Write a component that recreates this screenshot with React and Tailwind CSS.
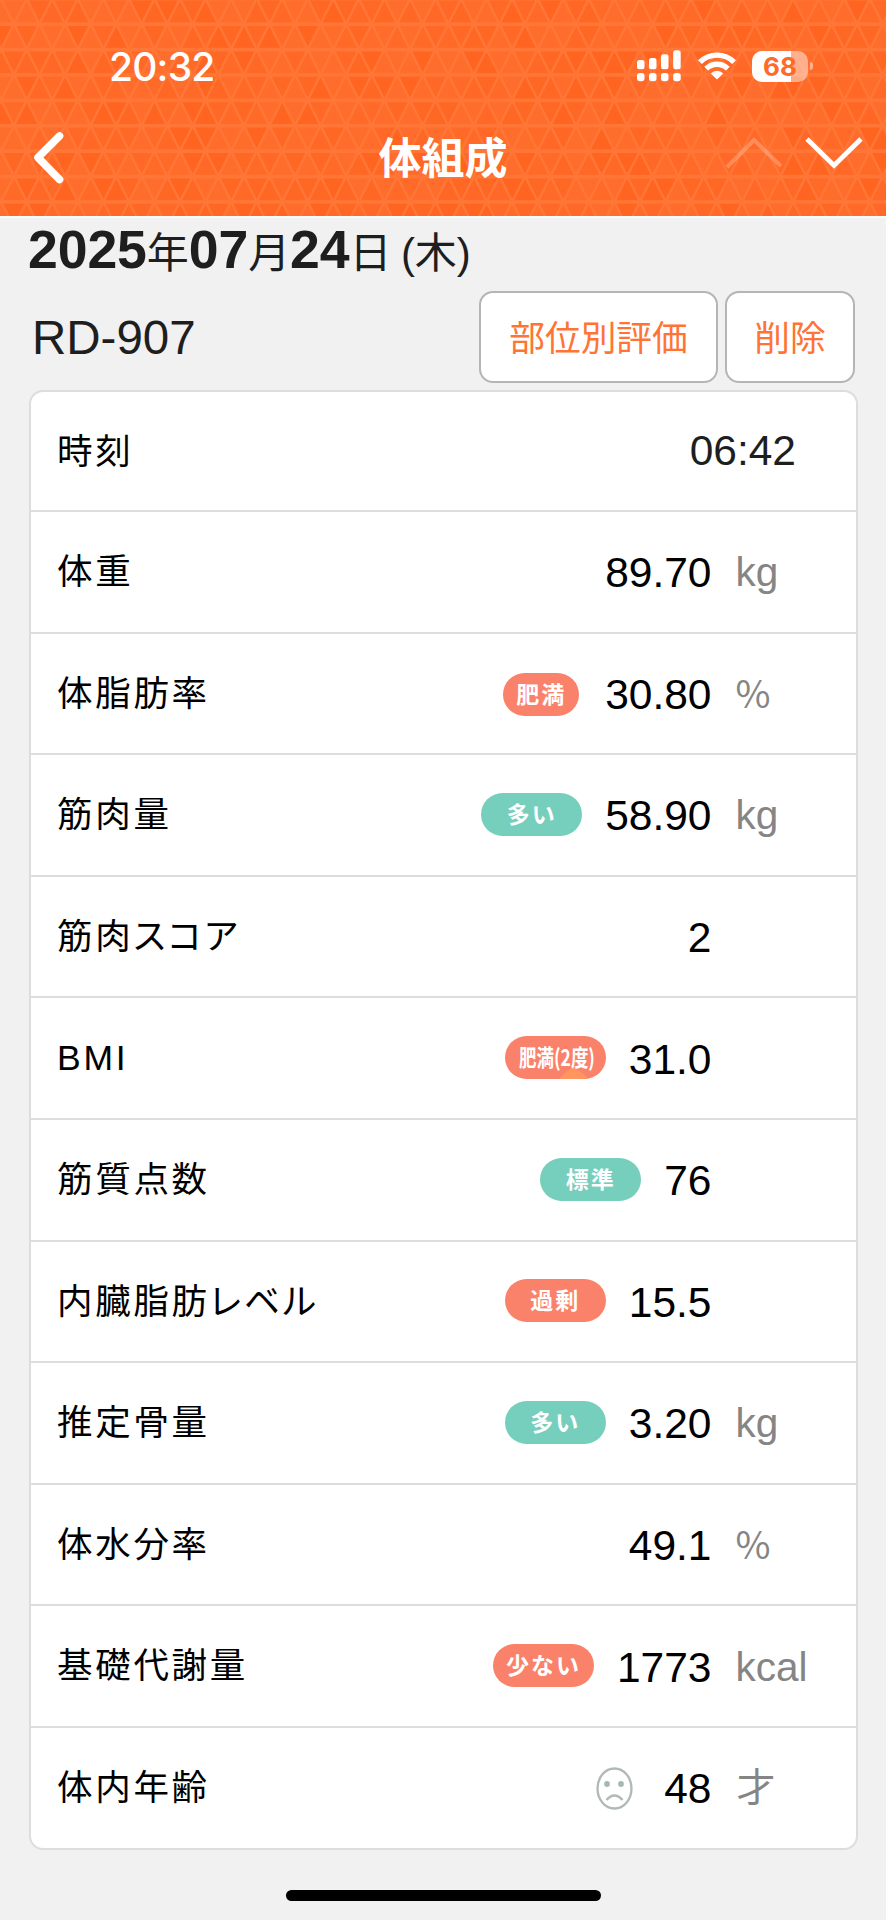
import React from "react";

const rows = [
  { label: "体重", value: "89.70", unit: "kg" },
  { label: "体脂肪率", value: "30.80", unit: "%", pill: { text: "肥満", tone: "red", small: true } },
  { label: "筋肉量", value: "58.90", unit: "kg", pill: { text: "多い", tone: "green" } },
  { label: "筋肉スコア", value: "2" },
  { label: "BMI", value: "31.0", pill: { text: "肥満(2度)", tone: "red", condensed: true } },
  { label: "筋質点数", value: "76", pill: { text: "標準", tone: "green" } },
  { label: "内臓脂肪レベル", value: "15.5", pill: { text: "過剰", tone: "red" } },
  { label: "推定骨量", value: "3.20", unit: "kg", pill: { text: "多い", tone: "green" } },
  { label: "体水分率", value: "49.1", unit: "%" },
  { label: "基礎代謝量", value: "1773", unit: "kcal", pill: { text: "少ない", tone: "red" } },
  { label: "体内年齢", value: "48", unit: "才", face: true },
];

const shades = ["#ff6c2b", "#ff6725", "#ff6a28", "#ff6421", "#ff6826", "#ff6d2c"];

function TrianglePattern() {
  const w = 25.55;
  const h = 25.4;
  const tris = [];
  for (let r = 0; r < 9; r++) {
    const top = -1.4 + r * h;
    const even = r % 2 === 0;
    const topX = even ? 1.2 : 13.97;
    const botX = even ? 13.97 : 1.2;
    for (let c = -2; c < 36; c++) {
      const a = Math.abs(Math.floor(Math.sin(r * 127.1 + c * 311.7) * 43758.5)) % 6;
      const b = Math.abs(Math.floor(Math.sin(r * 269.5 + c * 183.3) * 24634.6)) % 6;
      const tx = topX + c * w;
      const bx = botX + c * w;
      const mid = tx + w / 2;
      tris.push(
        <path key={`d${r}-${c}`} fill={shades[a]} d={`M${tx} ${top}H${tx + w}L${mid} ${top + h}Z`} />,
        <path key={`u${r}-${c}`} fill={shades[b]} d={`M${bx} ${top + h}H${bx + w}L${bx + w / 2} ${top}Z`} />
      );
    }
  }
  return (
    <svg className="absolute inset-0" width="886" height="216" viewBox="0 0 886 216" aria-hidden="true">
      <rect width="886" height="216" fill="#ff6927" />
      <g stroke="#ff7636" strokeWidth="2.4">{tris}</g>
      <g stroke="#ff7636" strokeWidth="3.6">
        {Array.from({ length: 9 }, (_, r) => (
          <path key={r} d={`M0 ${-1.2 + r * h}H886`} />
        ))}
      </g>
    </svg>
  );
}

function SignalIcon() {
  return (
    <svg width="44" height="32" viewBox="0 0 44 32" fill="#fff">
      <rect x="0" y="10" width="7.5" height="9.3" rx="2.5" />
      <rect x="12" y="8" width="7.5" height="11.3" rx="2.5" />
      <rect x="24" y="4.3" width="7.5" height="15" rx="2.5" />
      <rect x="36.2" y="0.3" width="7.5" height="19" rx="2.5" />
      <rect x="0" y="23" width="7.5" height="8.3" rx="2.8" />
      <rect x="12" y="23" width="7.5" height="8.3" rx="2.8" />
      <rect x="24" y="23" width="7.5" height="8.3" rx="2.8" />
      <rect x="36.2" y="23" width="7.5" height="8.3" rx="2.8" />
    </svg>
  );
}

function WifiIcon() {
  return (
    <svg width="38" height="28" viewBox="0 0 38 28" fill="none" stroke="#fff" strokeWidth="5.4">
      <path d="M1.9 10.2A24.2 24.2 0 0 1 36.1 10.2" />
      <path d="M8.2 16.7A15.4 15.4 0 0 1 29.8 16.7" />
      <path d="M12.8 21.4A8.8 8.8 0 0 1 25.2 21.4L19 27.6Z" fill="#fff" stroke="none" />
    </svg>
  );
}

function Battery() {
  return (
    <div className="flex items-center gap-[2px]">
      <div className="relative h-[31px] w-[56px] overflow-hidden rounded-[10px] bg-white/45">
        <div className="h-full w-[38.5px] bg-white" />
        <span className="absolute inset-0 text-center font-['Inter'] text-[26px] leading-[31px] font-bold text-[#ff6a28]">68</span>
      </div>
      <div className="h-[8px] w-[3px] rounded-r-full bg-white/45" />
    </div>
  );
}

function Pill({ text, tone, small, condensed }) {
  const bg = tone === "red" ? "bg-[#fb826a]" : "bg-[#76cebc]";
  const size = small ? "w-[76px] mr-[26px] mt-[2px]" : "w-[101px] mr-[23px] -mt-[1px]";
  return (
    <div className={`relative flex h-[43px] shrink-0 items-center justify-center overflow-hidden rounded-full font-['Noto_Sans_CJK_JP'] ${bg} ${size}`}>
      {condensed && (
        <svg className="absolute bottom-0 left-[54px]" width="30" height="11" viewBox="0 0 30 11">
          <path d="M0 11L9 2Q14 -2 19 2L30 11Z" fill="#ff955f" />
        </svg>
      )}
      {condensed ? (
        <span className="relative left-[2px] -mt-[2px] scale-x-[0.76] text-[23px] leading-none font-bold whitespace-nowrap text-white">{text}</span>
      ) : (
        <span className="-mt-[2px] text-[23px] leading-none font-bold tracking-[2px] whitespace-nowrap text-white">{text}</span>
      )}
    </div>
  );
}

function SadFace() {
  return (
    <svg className="mr-[31.5px] mt-[2px]" width="37" height="43" viewBox="0 0 37 43" fill="none" stroke="#b0b9b8" strokeWidth="2.3">
      <ellipse cx="18.5" cy="21.5" rx="17" ry="20" />
      <circle cx="11" cy="17" r="2.9" fill="#a5b8b6" stroke="none" />
      <circle cx="25" cy="17" r="2.9" fill="#a5b8b6" stroke="none" />
      <path d="M10.5 33Q18.5 24 26.5 33" strokeWidth="2.6" />
    </svg>
  );
}

function Unit({ unit }) {
  if (unit === "%") {
    return <span className="-mt-[4px] font-['Noto_Sans_CJK_JP'] text-[38px]">%</span>;
  }
  if (unit === "才") {
    return <span className="-mt-[9px] ml-[1px] font-['Noto_Sans_CJK_JP'] text-[39px]">才</span>;
  }
  return <span className="text-[40.5px]">{unit}</span>;
}

function Row({ label, value, unit, pill, face }) {
  return (
    <div className="flex h-[121.6px] items-center border-t-2 border-[#dddddd] pl-[26px]">
      <span className="mt-[2px] flex-1 text-[35.5px] leading-none tracking-[2.7px] whitespace-nowrap [font-feature-settings:'palt']">{label}</span>
      {pill && <Pill {...pill} />}
      {face && <SadFace />}
      <span className="mt-[3px] text-[42.5px] leading-[48px]">{value}</span>
      <span className="mt-[1px] flex h-[48px] w-[144.5px] items-center pl-[24px] leading-[48px] text-[#858585]">
        {unit && <Unit unit={unit} />}
      </span>
    </div>
  );
}

export default function App() {
  return (
    <div className="flex h-[1920px] w-[886px] flex-col overflow-hidden bg-[#f1f1f2] font-['Liberation_Sans','Noto_Sans_CJK_JP',sans-serif] text-black">
      <header className="relative h-[216px] shrink-0 overflow-hidden">
        <TrianglePattern />
        <div className="relative flex h-[132px] items-center pr-[73px] pl-[109px]">
          <span className="flex-1 font-['Inter'] text-[39px] leading-none font-medium tracking-[-0.8px] text-white">20:32</span>
          <div className="flex items-center">
            <SignalIcon />
            <div className="ml-[17px]">
              <WifiIcon />
            </div>
            <div className="ml-[16px]">
              <Battery />
            </div>
          </div>
        </div>
        <div className="relative grid h-[52px] grid-cols-[1fr_auto_1fr] items-center">
          <svg className="ml-[32px]" width="34" height="52" viewBox="0 0 34 52" fill="none" stroke="#fff" strokeWidth="7.6" strokeLinecap="round" strokeLinejoin="round">
            <path d="M27.5 4L6 25.5L27.5 47.5" />
          </svg>
          <h1 className="mt-[2px] text-[43px] leading-[50px] font-bold text-white">体組成</h1>
          <div className="flex justify-end gap-[23px] pr-[23px]">
            <svg width="58" height="52" viewBox="0 0 58 52" fill="none" stroke="#fff" strokeOpacity="0.24" strokeWidth="4">
              <path d="M3 35L30 8L57 34" />
            </svg>
            <svg width="58" height="52" viewBox="0 0 58 52" fill="none" stroke="#fff" strokeWidth="4.8">
              <path d="M2 7L29 33.5L56 7" />
            </svg>
          </div>
        </div>
      </header>
      <div className="h-[2px] shrink-0 bg-[#fafafa]" />

      <main className="flex flex-col pr-[28px] pl-[29px] text-[#1e1e1e]">
        <div className="-mt-[3px] -ml-[1px] flex h-[73px] items-baseline text-[42px] leading-[68px] tracking-[-0.1px] whitespace-pre [word-spacing:-2px]">
          <b className="text-[53.6px]">2025</b>年<b className="text-[53.6px]">07</b>月<b className="text-[53.6px]">24</b>日 (木)
        </div>
        <div className="flex h-[102px] items-start pr-[3px]">
          <span className="mt-[22px] ml-[3px] flex-1 text-[47.5px] leading-[56px]">RD-907</span>
          <div className="mt-[3px] flex gap-[7px] text-[35.7px] text-[#ff7435]">
            <button className="h-[92px] w-[239px] rounded-[14px] border-2 border-[#b5b5b5] bg-white pt-[5px] leading-none whitespace-nowrap">部位別評価</button>
            <button className="h-[92px] w-[130px] rounded-[14px] border-2 border-[#b5b5b5] bg-white pt-[5px] leading-none whitespace-nowrap">削除</button>
          </div>
        </div>
        <section className="overflow-hidden rounded-[14px] border-2 border-[#dddddd] bg-white text-black">
          <div className="flex h-[118px] items-center pr-[60px] pl-[26px]">
            <span className="mt-[3px] flex-1 text-[35.5px] leading-none tracking-[2.7px]">時刻</span>
            <span className="text-[42.5px] leading-[48px] text-[#1e1e1e]">06:42</span>
          </div>
          {rows.map((r) => (
            <Row key={r.label} {...r} />
          ))}
        </section>
      </main>
      <div className="mt-[40px] h-[11px] w-[315px] shrink-0 self-center rounded-full bg-black" />
    </div>
  );
}
